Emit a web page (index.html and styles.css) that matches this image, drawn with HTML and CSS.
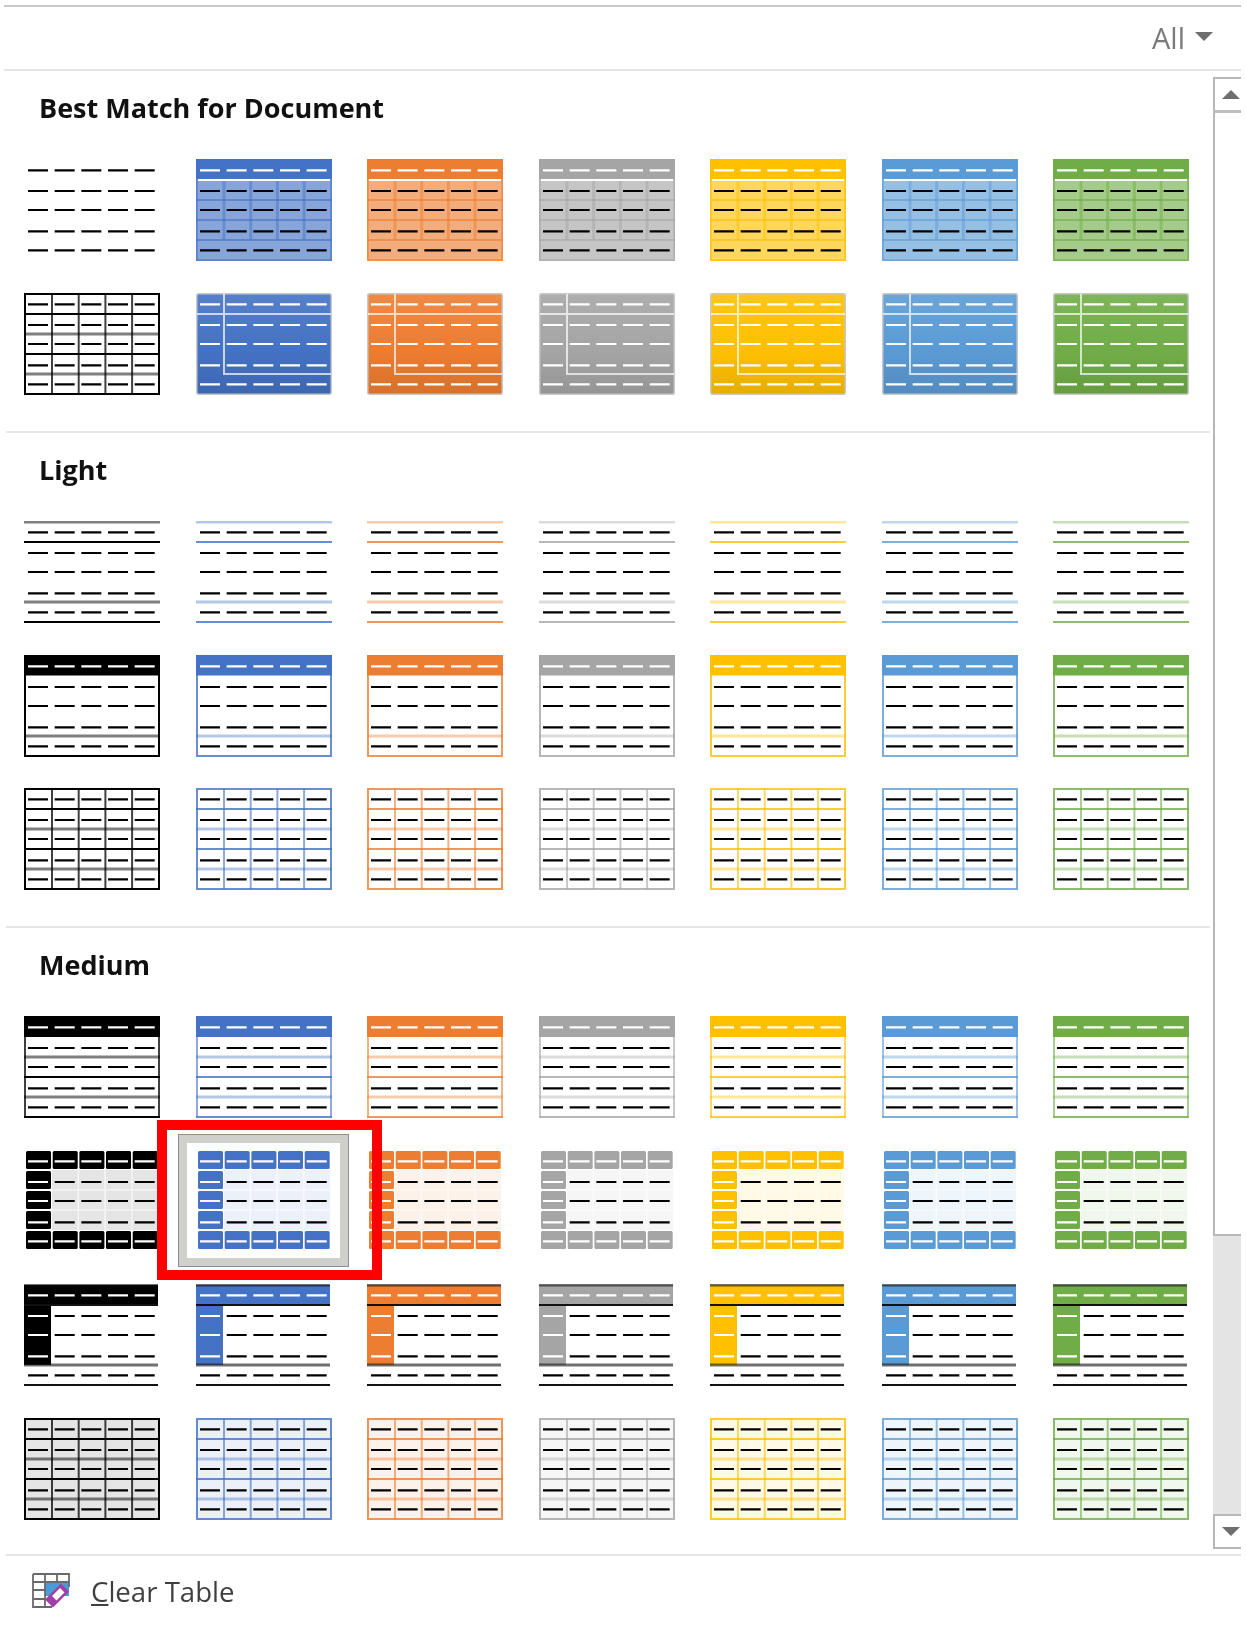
FILE: index.html
```html
<!DOCTYPE html>
<html lang="en">
<head>
<meta charset="utf-8">
<title>Table Styles</title>
<link rel="stylesheet" href="styles.css">
</head>
<body>
<svg class="defs" aria-hidden="true">
  <defs>
    <linearGradient id="shade" x1="0" y1="0" x2="0" y2="1">
      <stop offset="0" stop-color="#fff" stop-opacity=".1"/>
      <stop offset=".55" stop-color="#fff" stop-opacity="0"/>
      <stop offset=".56" stop-color="#000" stop-opacity="0"/>
      <stop offset="1" stop-color="#000" stop-opacity=".1"/>
    </linearGradient>
    <g id="dk">
      <path class="d k" d="M4 11.3H131M4 32H131M4 51H131M4 72.3H131M4 91.3H131"/>
    </g>
    <g id="dk-body">
      <path class="d k" d="M4 32H131M4 51H131M4 72.3H131M4 91.3H131"/>
    </g>
    <g id="wh-head">
      <path class="d w" d="M4 11.3H131"/>
    </g>
  </defs>

  <symbol id="plain" viewBox="0 0 136 102"><use href="#dk"/></symbol>

  <symbol id="best" viewBox="0 0 136 102">
    <rect class="fc o55" x="0" y="0" width="136" height="102"/>
    <rect class="fc" x="0" y="0" width="136" height="20"/>
    <path class="sc o60 w25" d="M28 21V81M54.7 21V81M81.4 21V81M108.1 21V81"/>
    <path class="sc o70 w15" d="M0 41H136M0 61H136M0 81H136"/>
    <rect class="sc o80 w15 none" x=".75" y=".75" width="134.500" height="100.500"/>
    <path class="sw w15" d="M2 21H134"/>
    <use href="#wh-head"/><use href="#dk-body"/>
  </symbol>

  <symbol id="accent" viewBox="0 0 136 102">
    <rect class="fc" x="1" y="1" width="134" height="100" rx="1.500"/>
    <rect x="1" y="1" width="134" height="100" fill="url(#shade)"/>
    <rect class="edge none" x=".75" y=".75" width="134.500" height="100.500" rx="1.500"/>
    <path class="sl w15" d="M1 21H135M28 1V81H135"/>
    <path class="d w" d="M4 11.3H131M4 32H131M4 51H131M4 72.3H131M4 91.3H131"/>
  </symbol>

  <symbol id="light1" viewBox="0 0 136 102">
    <path class="sc o50 w2" d="M0 1H136M0 81H136"/>
    <path class="sc w15" d="M0 21H136M0 101H136"/>
    <use href="#dk"/>
  </symbol>

  <symbol id="light2" viewBox="0 0 136 102">
    <rect class="fc" x="0" y="0" width="136" height="20.500"/>
    <path class="sc o50 w2" d="M0 81H136"/>
    <rect class="sc w15 none" x="1" y="1" width="134" height="100"/>
    <use href="#wh-head"/><use href="#dk-body"/>
  </symbol>

  <symbol id="grid" viewBox="0 0 136 102">
    <path class="sc o70 w15" d="M28 1V101M54.7 1V101M81.4 1V101M108.1 1V101"/>
    <path class="sc w15" d="M0 21H136M0 61H136"/>
    <path class="sc o50 w2" d="M0 41H136M0 81H136"/>
    <rect class="sc w15 none" x="1" y="1" width="134" height="100"/>
    <use href="#dk"/>
  </symbol>

  <symbol id="med1" viewBox="0 0 136 102">
    <rect class="fc" x="0" y="0" width="136" height="21"/>
    <path class="sc o50 w2" d="M0 41H136M0 81H136"/>
    <path class="sc w15" d="M0 61H136"/>
    <path class="sc o70 w15 none" d="M1 1V101M135 1V101"/>
    <path class="sc w15" d="M0 101H136"/>
    <use href="#wh-head"/><use href="#dk-body"/>
  </symbol>

  <symbol id="med2" viewBox="0 0 136 102">
    <g class="fc o10">
      <rect x="28" y="20" width="26.700" height="60"/><rect x="54.700" y="20" width="26.700" height="60"/><rect x="81.400" y="20" width="26.700" height="60"/><rect x="108.100" y="20" width="26" height="60"/>
    </g>
    <g class="fc">
      <rect x="2" y="1" width="25" height="18" rx="1.500"/><rect x="28.700" y="1" width="25" height="18" rx="1.500"/><rect x="55.400" y="1" width="25" height="18" rx="1.500"/><rect x="82" y="1" width="25" height="18" rx="1.500"/><rect x="108.700" y="1" width="25" height="18" rx="1.500"/>
      <rect x="2" y="21" width="25" height="18" rx="1.500"/><rect x="2" y="41" width="25" height="18" rx="1.500"/><rect x="2" y="61" width="25" height="18" rx="1.500"/>
      <rect x="2" y="81" width="25" height="18" rx="1.500"/><rect x="28.700" y="81" width="25" height="18" rx="1.500"/><rect x="55.400" y="81" width="25" height="18" rx="1.500"/><rect x="82" y="81" width="25" height="18" rx="1.500"/><rect x="108.700" y="81" width="25" height="18" rx="1.500"/>
    </g>
    <path class="gaps" d="M28 40H134M28 60H134M54.300 20V80M81 20V80M107.800 20V80"/>
    <path class="d w" d="M4 11.3H131M4 91.3H131"/>
    <path class="d w" d="M4 32H24M4 51H24M4 72.3H24"/>
    <path class="d k" d="M30.700 32H131M30.700 51H131M30.700 72.3H131"/>
  </symbol>

  <symbol id="med3" viewBox="0 0 136 102">
    <rect class="fc" x="0" y="1" width="134" height="20"/>
    <rect class="fc" x="0" y="20" width="27" height="61"/>
    <path class="sk o60 w2" d="M0 1H134M0 81H134"/>
    <path class="sk w15" d="M0 21H134M0 101H134"/>
    <path class="d w" d="M4 11.3H131M4 32H24M4 51H24M4 72.3H24"/>
    <path class="d k" d="M30.700 32H131M30.700 51H131M30.700 72.3H131M4 91.3H131"/>
  </symbol>

  <symbol id="med4" viewBox="0 0 136 102">
    <rect class="fc o10" x="0" y="0" width="136" height="102"/>
    <path class="sc o70 w15" d="M28 1V101M54.7 1V101M81.4 1V101M108.1 1V101"/>
    <path class="sc w15" d="M0 21H136M0 61H136"/>
    <path class="sc o50 w2" d="M0 41H136M0 81H136"/>
    <rect class="sc w15 none" x="1" y="1" width="134" height="100"/>
    <use href="#dk"/>
  </symbol>
</svg>

<main class="panel">
  <header class="toolbar">
    <span class="filter">All</span>
    <span class="caret"></span>
  </header>

  <div class="body">
    <div class="gallery">
      <section class="group">
        <h2>Best Match for Document</h2>
        <div class="grid">
          <svg class="thumb black"><use href="#plain"/></svg>
          <svg class="thumb blue"><use href="#best"/></svg>
          <svg class="thumb orange"><use href="#best"/></svg>
          <svg class="thumb grey"><use href="#best"/></svg>
          <svg class="thumb gold"><use href="#best"/></svg>
          <svg class="thumb sky"><use href="#best"/></svg>
          <svg class="thumb green"><use href="#best"/></svg>

          <svg class="thumb black"><use href="#grid"/></svg>
          <svg class="thumb blue"><use href="#accent"/></svg>
          <svg class="thumb orange"><use href="#accent"/></svg>
          <svg class="thumb grey"><use href="#accent"/></svg>
          <svg class="thumb gold"><use href="#accent"/></svg>
          <svg class="thumb sky"><use href="#accent"/></svg>
          <svg class="thumb green"><use href="#accent"/></svg>
        </div>
      </section>

      <section class="group">
        <h2>Light</h2>
        <div class="grid">
          <svg class="thumb black"><use href="#light1"/></svg>
          <svg class="thumb blue"><use href="#light1"/></svg>
          <svg class="thumb orange"><use href="#light1"/></svg>
          <svg class="thumb grey"><use href="#light1"/></svg>
          <svg class="thumb gold"><use href="#light1"/></svg>
          <svg class="thumb sky"><use href="#light1"/></svg>
          <svg class="thumb green"><use href="#light1"/></svg>

          <svg class="thumb black"><use href="#light2"/></svg>
          <svg class="thumb blue"><use href="#light2"/></svg>
          <svg class="thumb orange"><use href="#light2"/></svg>
          <svg class="thumb grey"><use href="#light2"/></svg>
          <svg class="thumb gold"><use href="#light2"/></svg>
          <svg class="thumb sky"><use href="#light2"/></svg>
          <svg class="thumb green"><use href="#light2"/></svg>

          <svg class="thumb black"><use href="#grid"/></svg>
          <svg class="thumb blue"><use href="#grid"/></svg>
          <svg class="thumb orange"><use href="#grid"/></svg>
          <svg class="thumb grey"><use href="#grid"/></svg>
          <svg class="thumb gold"><use href="#grid"/></svg>
          <svg class="thumb sky"><use href="#grid"/></svg>
          <svg class="thumb green"><use href="#grid"/></svg>
        </div>
      </section>

      <section class="group last">
        <h2>Medium</h2>
        <div class="grid">
          <svg class="thumb black"><use href="#med1"/></svg>
          <svg class="thumb blue"><use href="#med1"/></svg>
          <svg class="thumb orange"><use href="#med1"/></svg>
          <svg class="thumb grey"><use href="#med1"/></svg>
          <svg class="thumb gold"><use href="#med1"/></svg>
          <svg class="thumb sky"><use href="#med1"/></svg>
          <svg class="thumb green"><use href="#med1"/></svg>

          <svg class="thumb black"><use href="#med2"/></svg>
          <div class="selected">
            <svg class="thumb blue"><use href="#med2"/></svg>
            <span class="hover-box"></span>
            <span class="red-box"></span>
          </div>
          <svg class="thumb orange"><use href="#med2"/></svg>
          <svg class="thumb grey"><use href="#med2"/></svg>
          <svg class="thumb gold"><use href="#med2"/></svg>
          <svg class="thumb sky"><use href="#med2"/></svg>
          <svg class="thumb green"><use href="#med2"/></svg>

          <svg class="thumb black"><use href="#med3"/></svg>
          <svg class="thumb blue"><use href="#med3"/></svg>
          <svg class="thumb orange"><use href="#med3"/></svg>
          <svg class="thumb grey"><use href="#med3"/></svg>
          <svg class="thumb gold"><use href="#med3"/></svg>
          <svg class="thumb sky"><use href="#med3"/></svg>
          <svg class="thumb green"><use href="#med3"/></svg>

          <svg class="thumb black"><use href="#med4"/></svg>
          <svg class="thumb blue"><use href="#med4"/></svg>
          <svg class="thumb orange"><use href="#med4"/></svg>
          <svg class="thumb grey"><use href="#med4"/></svg>
          <svg class="thumb gold"><use href="#med4"/></svg>
          <svg class="thumb sky"><use href="#med4"/></svg>
          <svg class="thumb green"><use href="#med4"/></svg>
        </div>
      </section>
    </div>

    <aside class="scrollbar">
      <div class="sb-btn up"><span class="tri-up"></span></div>
      <div class="sb-thumb"></div>
      <div class="sb-track"></div>
      <div class="sb-btn down"><span class="tri-down"></span></div>
    </aside>
  </div>

  <footer class="footer">
    <svg class="clear-icon" viewBox="0 0 38 36">
      <rect class="ci-blue" x="13" y="9" width="24" height="14"/>
      <path class="ci-grid" d="M1 1H37V14M1 1V34H20M1 9H37M1 17H13M1 26H13M13 1V34M25 1V9"/>
      <path class="ci-eraser" d="M29 10.500L37 18.500L21 34.500L13 26.500Z"/>
      <path class="ci-hole" d="M28 15L32.500 19.500L24.500 27.500L20 23Z"/>
    </svg>
    <span class="clear-label"><u>C</u>lear Table</span>
  </footer>
</main>
</body>
</html>
```

FILE: styles.css
```css
* { box-sizing: border-box; }

html, body {
  margin: 0;
  padding: 0;
  background: #fff;
}

body {
  width: 1246px;
  height: 1627px;
  overflow: hidden;
  font-family: "Open Sans", "Noto Sans", sans-serif;
}

.defs {
  position: absolute;
  width: 0;
  height: 0;
}

.panel {
  width: 1241px;
  height: 1627px;
  padding-top: 5px;
  display: flex;
  flex-direction: column;
  filter: blur(.7px);
}

.toolbar {
  height: 66px;
  margin-left: 4px;
  border-top: 2px solid #c9c9c9;
  border-bottom: 2px solid #e4e4e4;
  display: flex;
  justify-content: flex-end;
  align-items: center;
  gap: 10px;
  padding: 0 28px 1px 0;
}

.filter {
  font-size: 29px;
  color: #7a7a7a;
}

.caret {
  width: 0;
  height: 0;
  margin-top: -2px;
  border-left: 9px solid transparent;
  border-right: 9px solid transparent;
  border-top: 9px solid #6e6e6e;
}

.body {
  height: 1483px;
  margin-left: 6px;
  display: flex;
}

.gallery {
  width: 1204px;
  flex: none;
}

.group {
  padding: 18px 0 36px 18px;
  border-bottom: 2px solid #e6e6e6;
}

.group.last {
  padding-bottom: 0;
  border-bottom: 0;
}

.group h2 {
  margin: 0 0 32px 15px;
  height: 38px;
  font-size: 27px;
  line-height: 38px;
  font-weight: 700;
  color: #111;
  white-space: nowrap;
}

.grid {
  display: grid;
  grid-template-columns: repeat(7, 136px);
  column-gap: 35.5px;
  row-gap: 31.8px;
}

.thumb {
  display: block;
  width: 136px;
  height: 102px;
  --lo: .8;
}

.black  { --c: #000; --lo: 1; }
.blue   { --c: #4472c4; }
.orange { --c: #ed7d31; }
.grey   { --c: #a5a5a5; }
.gold   { --c: #ffc000; }
.sky    { --c: #5b9bd5; }
.green  { --c: #70ad47; }

.fc { fill: var(--c); }
.sc { stroke: var(--c); stroke-opacity: var(--lo); fill: none; }
.sk { stroke: #111; fill: none; }
.sw { stroke: #fff; fill: none; }
.sl { stroke: #fff; stroke-opacity: .7; fill: none; }
.edge { stroke: #c8c8c8; stroke-width: 1.5px; }
.gaps { fill: none; stroke: #fff; stroke-opacity: .55; stroke-width: 1.5px; }
.none { fill: none; }
.o10 { opacity: .1; }
.o50 { opacity: .5; }
.o55 { opacity: .64; }
.o60 { opacity: .6; }
.o70 { opacity: .75; }
.o80 { opacity: .85; }
.w15 { stroke-width: 2px; }
.w2 { stroke-width: 2.8px; }
.w25 { stroke-width: 3px; }

.d {
  fill: none;
  stroke-width: 2.2px;
  stroke-dasharray: 20 6.67;
}
.d.k { stroke: #000; }
.d.w { stroke: #fff; }

.selected {
  position: relative;
  width: 136px;
  height: 102px;
}

.hover-box {
  position: absolute;
  left: -18px;
  right: -17px;
  top: -16.5px;
  bottom: -14.5px;
  border: 9px solid #cfcfcc;
  outline: 1.5px solid #8f8f8c;
  outline-offset: -1.5px;
}

.red-box {
  position: absolute;
  left: -39px;
  right: -50px;
  top: -30px;
  bottom: -28px;
  border: 10px solid #f00;
}

.scrollbar {
  width: 28px;
  margin: 6px 0 5px 3px;
  display: flex;
  flex-direction: column;
}

.sb-btn {
  height: 36px;
  flex: none;
  border-left: 2px solid #b8b8b8;
  display: flex;
  align-items: center;
  justify-content: center;
  padding-left: 6px;
}

.sb-btn.up {
  border-top: 2px solid #b8b8b8;
  border-bottom: 3px solid #bdbdbd;
}

.sb-btn.down {
  height: 35px;
  border-top: 2px solid #b8b8b8;
  border-bottom: 2px solid #b8b8b8;
}

.sb-thumb {
  height: 1123px;
  flex: none;
  border-left: 2px solid #b8b8b8;
  border-bottom: 2px solid #b8b8b8;
}

.sb-track {
  flex: 1;
  background: #e4e4e4;
}

.tri-up, .tri-down {
  width: 0;
  height: 0;
  border-left: 9px solid transparent;
  border-right: 9px solid transparent;
}

.tri-up { border-bottom: 9px solid #6e6e6e; }
.tri-down { border-top: 9px solid #6e6e6e; }

.footer {
  height: 73px;
  margin-left: 6px;
  border-top: 2px solid #e6e6e6;
  display: flex;
  align-items: center;
  padding: 0 0 2px 26px;
  gap: 21px;
}

.clear-icon {
  width: 38px;
  height: 36px;
  flex: none;
}

.ci-blue { fill: #4a9bd8; }
.ci-grid { fill: none; stroke: #6a6a6a; stroke-width: 1.8px; }
.ci-eraser { fill: #a13fa8; }
.ci-hole { fill: #fff; }

.clear-label {
  font-size: 27.6px;
  color: #3f3f3f;
  white-space: nowrap;
}
```
